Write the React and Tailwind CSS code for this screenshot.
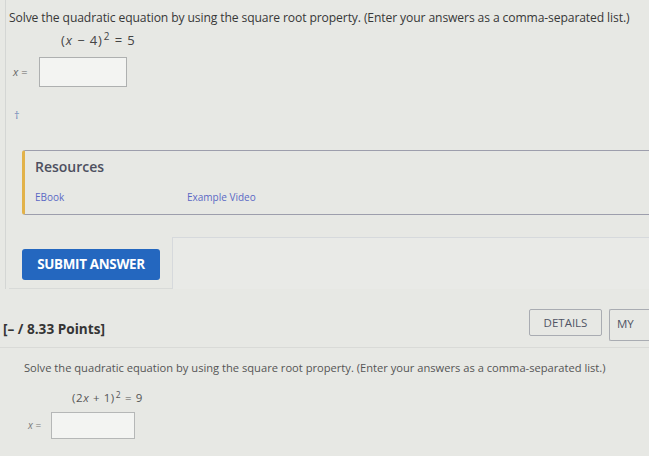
export default function App() {
  return (
    <div
      className="w-[649px] h-[456px] overflow-hidden bg-[#e7e8e4] text-[#3a3a3a]"
      style={{ fontFamily: '"Open Sans", "Noto Sans", Arial, sans-serif' }}
    >
      {/* first question */}
      <div className="ml-[5px] border-l border-[#d4d6d4] pl-[3px] pt-[10px]">
        <p className="text-[12.15px] leading-[16px] font-medium tracking-[-0.12px] text-[#383838] whitespace-nowrap">
          Solve the quadratic equation by using the square root property. (Enter your answers as a comma-separated list.)
        </p>
        <div className="mt-[6px] pl-[52px] text-[13px] leading-[17px] text-[#444] tracking-[0.9px]">
          (<i>x</i> − 4)<sup className="text-[10px] ml-[1px]">2</sup> = 5
        </div>
        <div className="mt-[8px] flex items-center gap-[12px] pl-[4px]">
          <span className="text-[11px] text-[#666]">
            <i>x</i> =
          </span>
          <div className="w-[88px] h-[30px] border border-[#aeb0b0] bg-[#f3f4f2]" />
        </div>
        <div className="mt-[21px] pl-[5px] text-[11px] leading-[14px] text-[#6b87b8]">†</div>

        {/* resources */}
        <div className="mt-[28px] ml-[13px] h-[65px] border border-l-[3px] border-[#9d9eac] border-l-[#e2b24a] border-r-0 rounded-l-[3px] pl-[10px] pt-[7px]">
          <div className="text-[14px] leading-[18px] font-semibold text-[#4e5060]">Resources</div>
          <div className="mt-[14px] flex text-[10px] leading-[14px] text-[#5b68c4]">
            <span className="w-[152px]">EBook</span>
            <span>Example Video</span>
          </div>
        </div>

        {/* submit row */}
        <div className="mt-[22px] flex">
          <div className="w-[163px] h-[52px] border-b border-[#d8dad8] pl-[13px] pt-[12px]">
            <button className="w-[138px] h-[31px] rounded-[3px] bg-[#2467bf] text-white text-[13.4px] font-bold tracking-[-0.3px]">
              SUBMIT ANSWER
            </button>
          </div>
          <div className="flex-1 h-[52px] border-t border-l border-[#d6d9dc] bg-[#e9eae7]" />
        </div>
      </div>

      {/* second question header */}
      <div className="mt-[20px] flex items-start h-[39px] border-b border-[#d9dad7]">
        <div className="pl-[3px] pt-[11px] text-[13.6px] leading-[17px] font-bold text-[#353535]">
          [– / 8.33 Points]
        </div>
        <div className="ml-auto flex gap-[7px]">
          <div className="w-[73px] h-[27px] border border-[#a9acb2] rounded-[2px] flex items-center justify-center text-[11.5px] font-medium text-[#505464]">
            DETAILS
          </div>
          <div className="w-[40px] h-[32px] border border-r-0 border-[#a9acb2] rounded-l-[2px] flex items-start pt-[5px] pl-[7px] text-[11.5px] font-medium text-[#505464]">
            MY
          </div>
        </div>
      </div>

      {/* second question */}
      <div className="pl-[24px] pt-[13px]">
        <p className="text-[11.15px] leading-[14px] text-[#555] whitespace-nowrap">
          Solve the quadratic equation by using the square root property. (Enter your answers as a comma-separated list.)
        </p>
        <div className="mt-[15px] pl-[48px] text-[11.5px] leading-[15px] text-[#555] tracking-[0.6px]">
          (2<i>x</i> + 1)<sup className="text-[8.5px] ml-[1px]">2</sup> = 9
        </div>
        <div className="mt-[7px] flex items-center gap-[10px] pl-[4px]">
          <span className="text-[10px] text-[#777]">
            <i>x</i> =
          </span>
          <div className="w-[84px] h-[27px] border border-[#b5b7b7] bg-[#f3f4f2]" />
        </div>
      </div>
    </div>
  );
}
